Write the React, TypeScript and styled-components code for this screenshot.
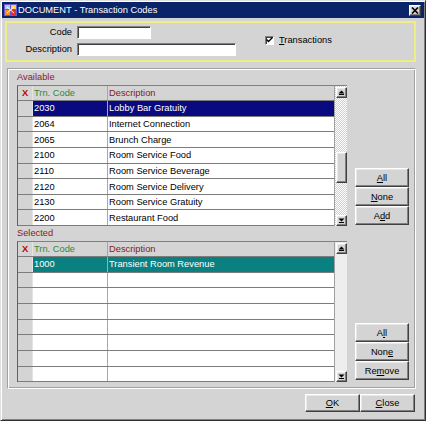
import React from 'react';
import styled, { createGlobalStyle, css } from 'styled-components';

const FACE = '#d4d4d4';

const GlobalStyle = createGlobalStyle`
  html, body {
    margin: 0;
    padding: 0;
    background: ${FACE};
  }
  body {
    font-family: "Liberation Sans", Arial, sans-serif;
    font-size: 9.3px;
    color: #000;
  }
  * {
    box-sizing: border-box;
  }
`;

const raised = css`
  border: 1px solid;
  border-color: #fff #404040 #404040 #fff;
  box-shadow: inset -1px -1px 0 #808080, inset 1px 1px 0 #e8e8e8;
  background: ${FACE};
`;

const sunken = css`
  border: 1px solid;
  border-color: #808080 #fff #fff #808080;
  box-shadow: inset 1px 1px 0 #404040;
  background: #fff;
`;

const Window = styled.div`
  width: 426px;
  height: 421px;
  background: ${FACE};
  border: 1px solid;
  border-color: #e0e0e0 #303030 #303030 #e0e0e0;
  box-shadow: inset 1px 1px 0 #fff, inset -1px -1px 0 #808080;
  padding: 1px;
  display: flex;
  flex-direction: column;
`;

const TitleBar = styled.div`
  height: 16px;
  background: #0a246a;
  display: flex;
  align-items: center;
  padding: 0 3px 0 2px;
  gap: 1px;
  color: #fff;
`;

const TitleText = styled.span`
  flex: 1;
  font-size: 9.3px;
  line-height: 16px;
`;

const CloseBox = styled.div`
  ${raised}
  width: 12px;
  height: 11px;
  display: flex;
  align-items: center;
  justify-content: center;
`;

const Content = styled.div`
  flex: 1;
  display: flex;
  flex-direction: column;
  padding: 3px 8px 0 3px;
`;

const FilterPanel = styled.div`
  height: 41px;
  border: 2px solid #eeee86;
  display: flex;
  align-items: flex-start;
  padding: 3px 0 0 0;
`;

const FieldGrid = styled.div`
  display: grid;
  grid-template-columns: 65px 159px;
  column-gap: 5px;
  row-gap: 4px;
  align-items: center;
`;

const FieldLabel = styled.label`
  text-align: right;
  line-height: 13px;
`;

const TextBox = styled.div<{ $width: number }>`
  ${sunken}
  width: ${(p) => p.$width}px;
  height: 13px;
`;

const CheckRow = styled.div`
  display: flex;
  align-items: center;
  gap: 5px;
  margin: 9px 0 0 29px;
`;

const CheckBox = styled.div`
  ${sunken}
  width: 9px;
  height: 9px;
  display: flex;
  align-items: center;
  justify-content: center;
`;

const MainPanel = styled.div`
  margin: 6px 0 0 2px;
  border: 1px solid;
  border-color: #a0a0a0 #fff #fff #a0a0a0;
  box-shadow: inset 1px 1px 0 #fff, inset -1px -1px 0 #a0a0a0;
  padding: 1px 6px 6px 9px;
  display: flex;
  flex-direction: column;
`;

const SectionLabel = styled.div`
  height: 15px;
  line-height: 15px;
  color: #8b1a1a;
`;

const SectionRow = styled.div`
  display: flex;
  gap: 8px;
`;

const GridFrame = styled.div`
  display: flex;
  width: 330px;
`;

const Grid = styled.div`
  width: 317px;
  border-top: 1px solid #808080;
  border-left: 1px solid #606060;
  background: #fff;
`;

const Row = styled.div<{ $height: number }>`
  display: grid;
  grid-template-columns: 15px 75px 1fr;
  height: ${(p) => p.$height}px;
  border-bottom: 1px solid #7c7c7c;
`;

const Cell = styled.div<{ $tone?: 'head' | 'navy' | 'teal' | 'plain'; $sep?: boolean }>`
  display: flex;
  align-items: center;
  padding-left: 1px;
  white-space: nowrap;
  overflow: hidden;
  border-right: ${(p) => (p.$sep ? '1px solid #a8a8a8' : 'none')};
  background: ${(p) =>
    p.$tone === 'head' ? FACE : p.$tone === 'navy' ? '#0a0a80' : p.$tone === 'teal' ? '#0b8080' : '#fff'};
  color: ${(p) => (p.$tone === 'navy' || p.$tone === 'teal' ? '#fff' : '#000')};
`;

const MarkCell = styled.div`
  background: ${FACE};
  border-right: 1px solid #e4e4e4;
  display: flex;
  align-items: center;
  justify-content: center;
  color: #c00000;
  font-weight: bold;
`;

const HeadText = styled.span<{ $color: string }>`
  color: ${(p) => p.$color};
`;

const ScrollBar = styled.div<{ $dither: boolean }>`
  width: 13px;
  display: flex;
  flex-direction: column;
  align-items: flex-end;
  border-top: 1px solid #808080;
  border-left: 1px solid #a0a0a0;
  background: ${(p) =>
    p.$dither ? `repeating-conic-gradient(#ffffff 0 25%, #cfcfcf 0 50%) 0 0 / 2px 2px` : '#eeeeee'};
`;

const ArrowBtn = styled.div<{ $down?: boolean }>`
  ${raised}
  width: 11px;
  height: 11px;
  margin-top: ${(p) => (p.$down ? 'auto' : '1px')};
  display: flex;
  align-items: center;
  justify-content: center;
`;

const Thumb = styled.div<{ $top: number; $size: number }>`
  ${raised}
  width: 11px;
  height: ${(p) => p.$size}px;
  margin-top: ${(p) => p.$top}px;
`;

const ButtonColumn = styled.div<{ $lift: number }>`
  display: flex;
  flex-direction: column;
  align-self: flex-end;
  margin-bottom: ${(p) => p.$lift}px;
`;

const PushButton = styled.button<{ $w: number; $h: number }>`
  ${raised}
  width: ${(p) => p.$w}px;
  height: ${(p) => p.$h}px;
  padding: 0;
  font-family: inherit;
  font-size: 9.3px;
  color: #000;
  cursor: default;
`;

const Footer = styled.div`
  display: flex;
  justify-content: flex-end;
  margin: 5px 1px 0 0;
`;

type Item = { code: string; desc: string };

const available: Item[] = [
  { code: '2030', desc: 'Lobby Bar Gratuity' },
  { code: '2064', desc: 'Internet Connection' },
  { code: '2065', desc: 'Brunch Charge' },
  { code: '2100', desc: 'Room Service Food' },
  { code: '2110', desc: 'Room Service Beverage' },
  { code: '2120', desc: 'Room Service Delivery' },
  { code: '2130', desc: 'Room Service Gratuity' },
  { code: '2200', desc: 'Restaurant Food' },
];

const selected: Item[] = [
  { code: '1000', desc: 'Transient Room Revenue' },
  ...Array.from({ length: 7 }, () => ({ code: '', desc: '' })),
];

const Arrow = ({ down }: { down?: boolean }) => (
  <svg width="7" height="5" viewBox="0 0 7 5">
    {down ? (
      <>
        <path d="M0.5 0.5h6L3.5 3.5z" fill="#000" />
        <rect x="1" y="4" width="5" height="1" fill="#000" />
      </>
    ) : (
      <>
        <path d="M0.5 3.5h6L3.5 0.5z" fill="#000" />
        <rect x="1" y="4" width="5" height="1" fill="#000" />
      </>
    )}
  </svg>
);

const GridView = ({
  rows,
  tone,
  dither,
  thumb,
}: {
  rows: Item[];
  tone: 'navy' | 'teal';
  dither: boolean;
  thumb?: { top: number; size: number };
}) => (
  <GridFrame>
    <Grid>
      <Row $height={15}>
        <MarkCell>X</MarkCell>
        <Cell $tone="head" $sep>
          <HeadText $color="#2f8a2f">Trn. Code</HeadText>
        </Cell>
        <Cell $tone="head">
          <HeadText $color="#7e1c1c">Description</HeadText>
        </Cell>
      </Row>
      {rows.map((r, i) => (
        <Row key={i} $height={15.65}>
          <MarkCell />
          <Cell $tone={i === 0 ? tone : 'plain'} $sep>
            {r.code}
          </Cell>
          <Cell $tone={i === 0 ? tone : 'plain'}>{r.desc}</Cell>
        </Row>
      ))}
    </Grid>
    <ScrollBar $dither={dither}>
      <ArrowBtn>
        <Arrow />
      </ArrowBtn>
      {thumb && <Thumb $top={thumb.top} $size={thumb.size} />}
      <ArrowBtn $down>
        <Arrow down />
      </ArrowBtn>
    </ScrollBar>
  </GridFrame>
);

const AppIcon = () => (
  <svg width="13" height="12" viewBox="0 0 13 12">
    <rect x="0" y="0" width="13" height="12" fill="#6a5acd" />
    <rect x="1" y="1" width="5" height="4" fill="#9fd0ff" />
    <rect x="7" y="1" width="5" height="4" fill="#ffd23c" />
    <rect x="1" y="6" width="5" height="5" fill="#ff8c1a" />
    <rect x="7" y="6" width="5" height="5" fill="#e03030" />
    <path d="M3 3l7 6M10 3l-7 6" stroke="#fff" strokeWidth="1" />
  </svg>
);

export default function App() {
  return (
    <>
      <GlobalStyle />
      <Window>
        <TitleBar>
          <AppIcon />
          <TitleText>DOCUMENT - Transaction Codes</TitleText>
          <CloseBox>
            <svg width="8" height="7" viewBox="0 0 8 7">
              <path d="M1 0.5l6 6M7 0.5l-6 6" stroke="#000" strokeWidth="1.6" />
            </svg>
          </CloseBox>
        </TitleBar>
        <Content>
          <FilterPanel>
            <FieldGrid>
              <FieldLabel>Code</FieldLabel>
              <TextBox $width={74} />
              <FieldLabel>Description</FieldLabel>
              <TextBox $width={159} />
            </FieldGrid>
            <CheckRow>
              <CheckBox>
                <svg width="7" height="6" viewBox="0 0 7 6">
                  <path d="M0.5 2.5l2 2l4-4" stroke="#000" strokeWidth="1.4" fill="none" />
                </svg>
              </CheckBox>
              <span>
                <u>T</u>ransactions
              </span>
            </CheckRow>
          </FilterPanel>
          <MainPanel>
            <SectionLabel>Available</SectionLabel>
            <SectionRow>
              <GridView rows={available} tone="navy" dither thumb={{ top: 54, size: 31 }} />
              <ButtonColumn $lift={1}>
                <PushButton $w={54} $h={19}>
                  <u>A</u>ll
                </PushButton>
                <PushButton $w={54} $h={19}>
                  <u>N</u>one
                </PushButton>
                <PushButton $w={54} $h={19}>
                  A<u>d</u>d
                </PushButton>
              </ButtonColumn>
            </SectionRow>
            <SectionLabel>Selected</SectionLabel>
            <SectionRow>
              <GridView rows={selected} tone="teal" dither={false} />
              <ButtonColumn $lift={2}>
                <PushButton $w={54} $h={19}>
                  A<u>l</u>l
                </PushButton>
                <PushButton $w={54} $h={19}>
                  Non<u>e</u>
                </PushButton>
                <PushButton $w={54} $h={19}>
                  Re<u>m</u>ove
                </PushButton>
              </ButtonColumn>
            </SectionRow>
          </MainPanel>
          <Footer>
            <PushButton $w={55} $h={18}>
              <u>O</u>K
            </PushButton>
            <PushButton $w={55} $h={18}>
              <u>C</u>lose
            </PushButton>
          </Footer>
        </Content>
      </Window>
    </>
  );
}
